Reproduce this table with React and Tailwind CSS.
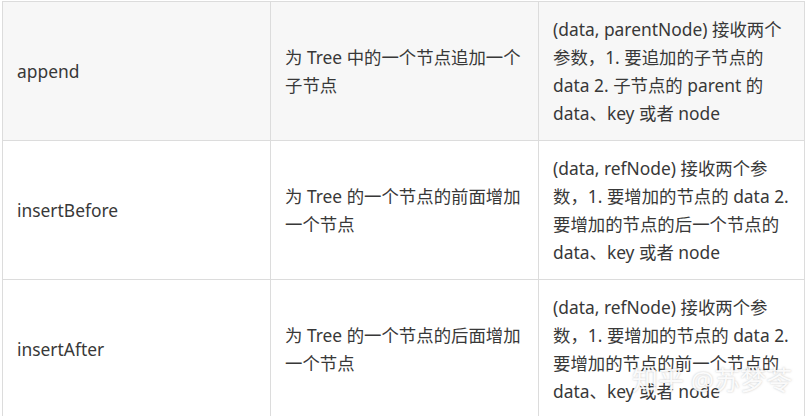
const rows = [
  {
    name: 'append',
    desc: ['为 Tree 中的一个节点追加一个', '子节点'],
    params: [
      '(data, parentNode) 接收两个',
      '参数，1. 要追加的子节点的',
      'data 2. 子节点的 parent 的',
      'data、key 或者 node',
    ],
    bg: 'bg-[#f7f7f7]',
  },
  {
    name: 'insertBefore',
    desc: ['为 Tree 的一个节点的前面增加', '一个节点'],
    params: [
      '(data, refNode) 接收两个参',
      '数，1. 要增加的节点的 data 2.',
      '要增加的节点的后一个节点的',
      'data、key 或者 node',
    ],
    bg: 'bg-white',
  },
  {
    name: 'insertAfter',
    desc: ['为 Tree 的一个节点的后面增加', '一个节点'],
    params: [
      '(data, refNode) 接收两个参',
      '数，1. 要增加的节点的 data 2.',
      '要增加的节点的前一个节点的',
      'data、key 或者 node',
    ],
    bg: 'bg-white',
  },
]

function Lines({ items }) {
  return items.map((line, i) => (
    <span key={i} className="block whitespace-nowrap">
      {line}
    </span>
  ))
}

export default function App() {
  return (
    <div className="relative h-[416px] w-[807px] overflow-hidden bg-white pl-[2px] pt-px font-['Noto_Sans','Noto_Sans_CJK_SC',sans-serif] text-[17.4px] leading-[28px] text-[#383838]">
      <table className="w-[802px] table-fixed border-collapse">
        <colgroup>
          <col className="w-[268px]" />
          <col className="w-[268px]" />
          <col className="w-[266px]" />
        </colgroup>
        <tbody>
          {rows.map((row) => (
            <tr key={row.name} className={`h-[139px] ${row.bg}`}>
              <td className="border border-[#dcdcdc] px-[14px] align-middle">
                {row.name}
              </td>
              <td className="border border-[#dcdcdc] px-[14px] align-middle">
                <Lines items={row.desc} />
              </td>
              <td className="border border-[#dcdcdc] px-[14px] align-middle">
                <Lines items={row.params} />
              </td>
            </tr>
          ))}
        </tbody>
      </table>
      <div className="absolute left-[632px] top-[362px] whitespace-nowrap text-[26px] leading-[36px] text-white/90 [text-shadow:0_0_2px_rgba(130,130,130,0.5)]">
        知乎 @苏梦苓
      </div>
    </div>
  )
}
